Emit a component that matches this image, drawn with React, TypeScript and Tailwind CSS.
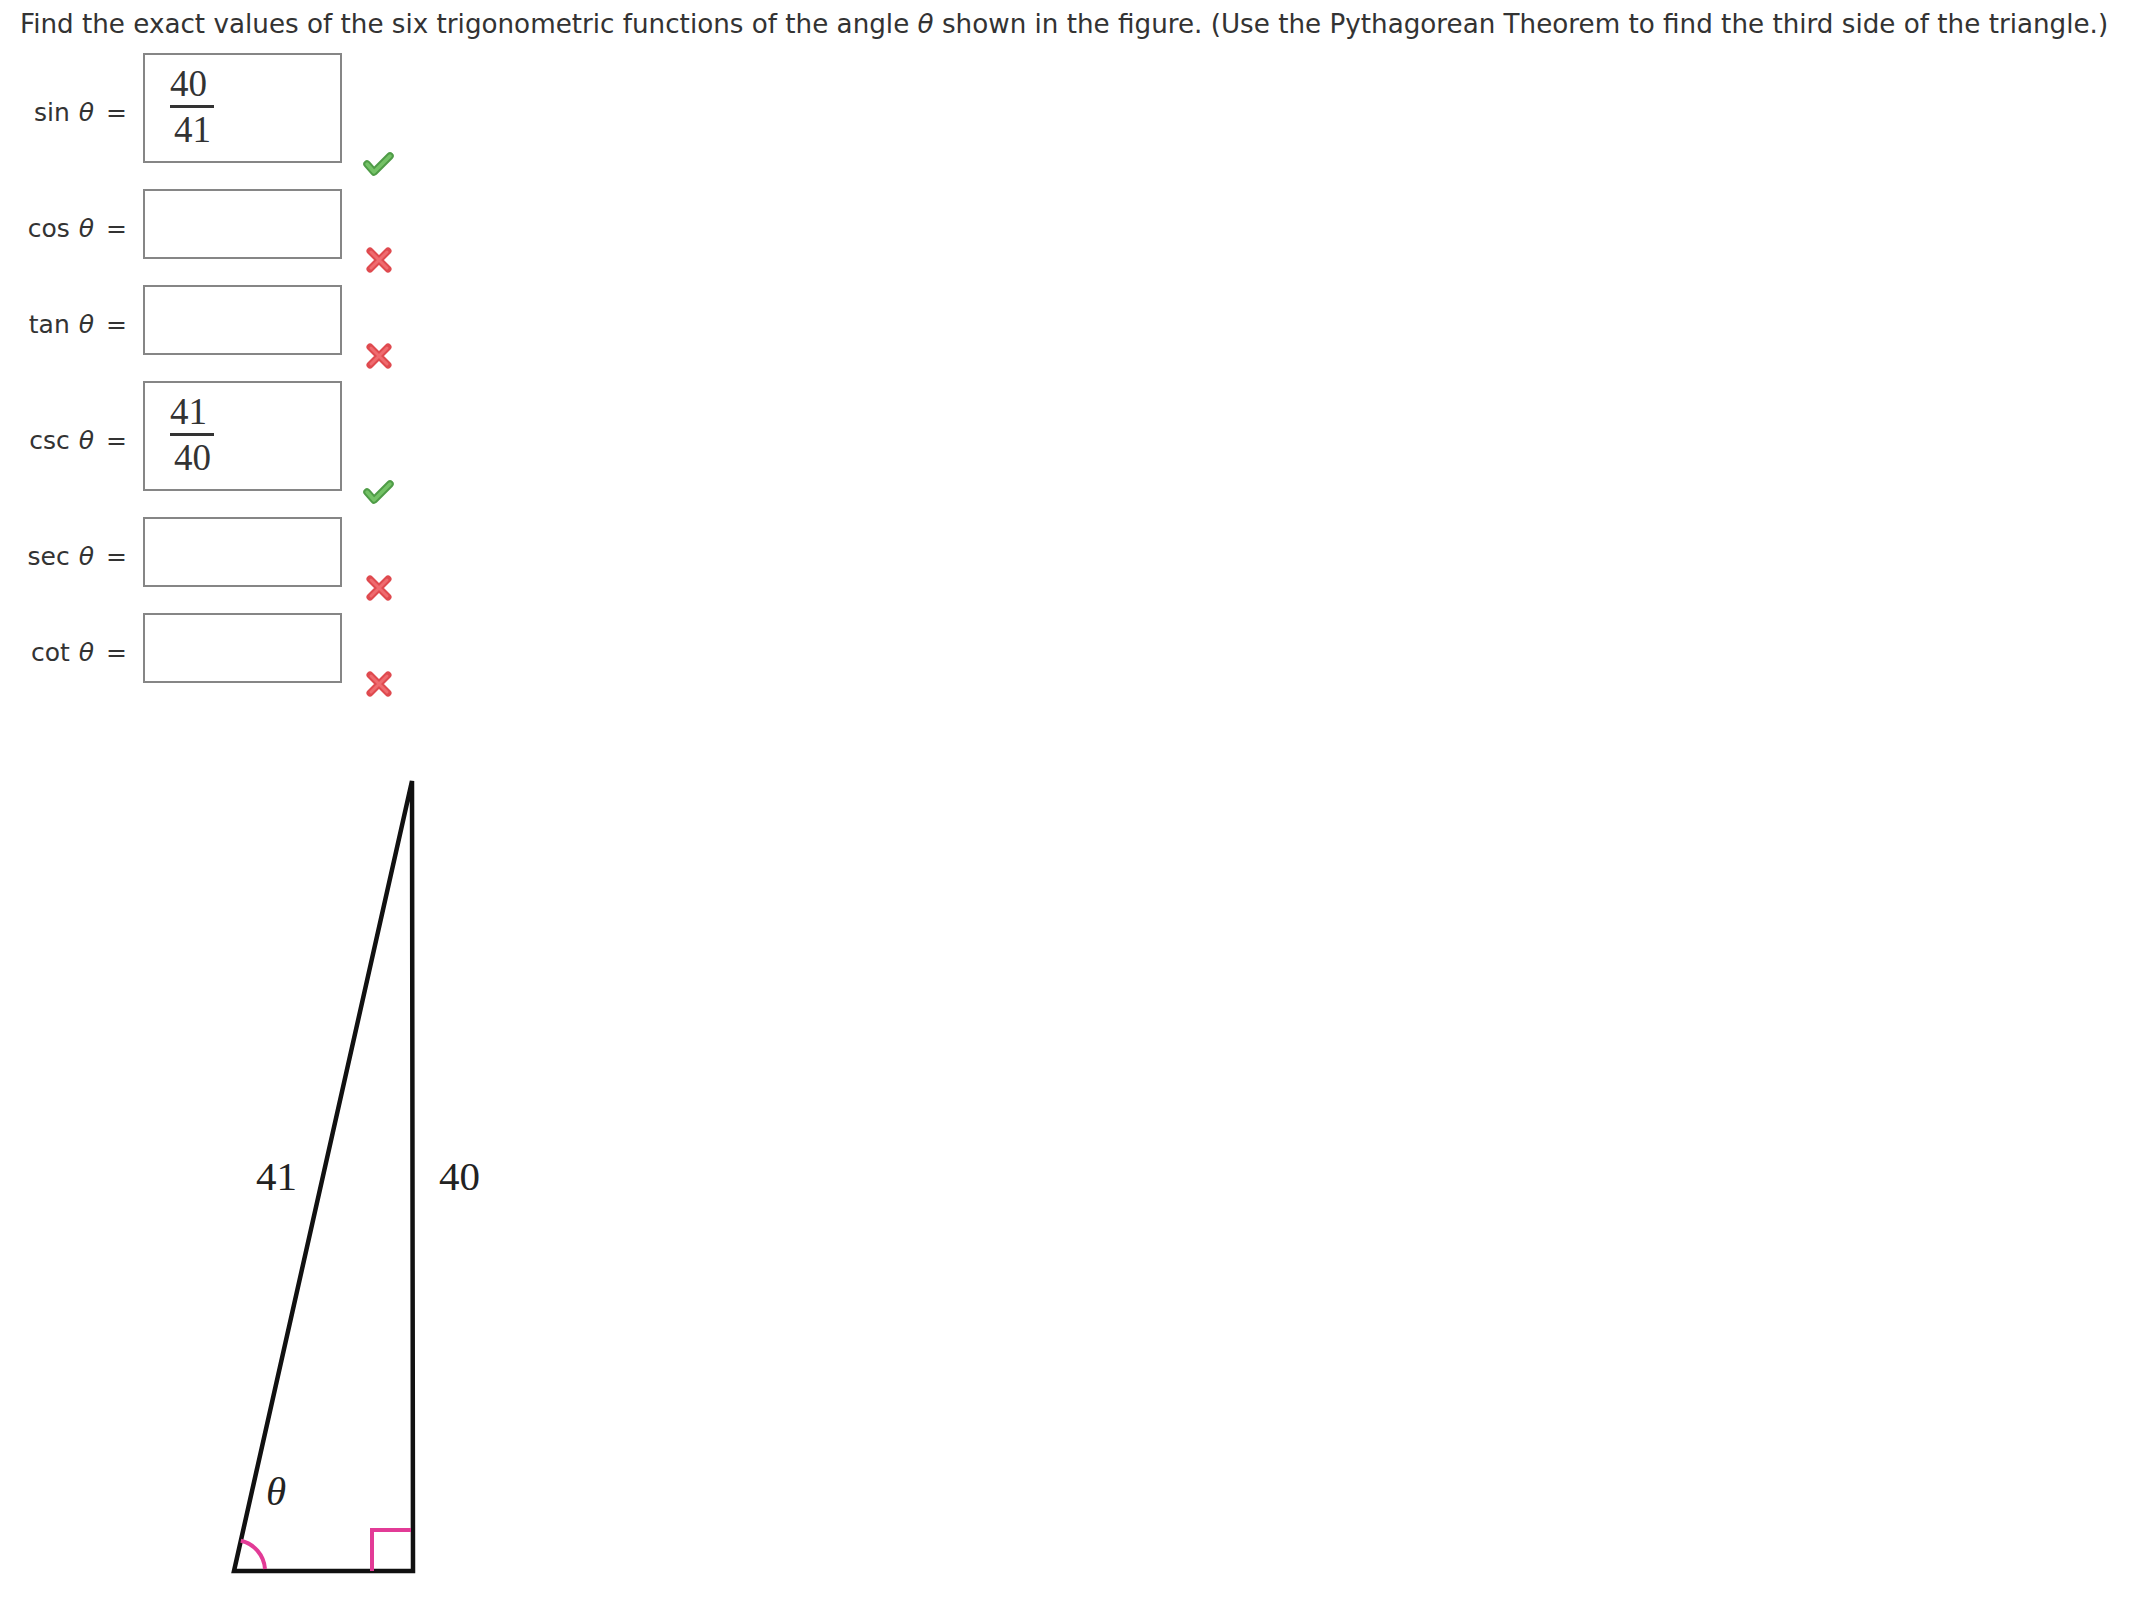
import React from 'react'

type Row = {
  fn: string
  value?: [string, string]
  correct: boolean
}

const rows: Row[] = [
  { fn: 'sin', value: ['40', '41'], correct: true },
  { fn: 'cos', correct: false },
  { fn: 'tan', correct: false },
  { fn: 'csc', value: ['41', '40'], correct: true },
  { fn: 'sec', correct: false },
  { fn: 'cot', correct: false },
]

function CheckIcon() {
  return (
    <svg width="31" height="27" viewBox="0 0 31 27" fill="none">
      <polyline points="4,14 11,22 27,6" stroke="#4f9c47" strokeWidth="7.5" strokeLinecap="round" strokeLinejoin="round" />
      <polyline points="4,14 11,22 27,6" stroke="#74c266" strokeWidth="3.5" strokeLinecap="round" strokeLinejoin="round" />
    </svg>
  )
}

function CrossIcon() {
  return (
    <svg width="28" height="28" viewBox="0 0 28 28" fill="none">
      <path d="M5 5 L23 23 M23 5 L5 23" stroke="#df4a4f" strokeWidth="7" strokeLinecap="round" />
      <path d="M6 6 L22 22 M22 6 L6 22" stroke="#ef6b6f" strokeWidth="3" strokeLinecap="round" />
    </svg>
  )
}

function Fraction({ top, bottom }: { top: string; bottom: string }) {
  return (
    <div className="flex w-[44px] flex-col font-['Liberation_Serif',serif] text-[37px] leading-none text-[#333]">
      <span className="pr-[8px] text-center">{top}</span>
      <span className="mt-[3px] h-[2.5px] w-full bg-[#333]" />
      <span className="mt-[3px] pl-[4px] pr-[4px] text-center">{bottom}</span>
    </div>
  )
}

function AnswerRow({ row }: { row: Row }) {
  return (
    <div className="flex items-end">
      <div className="flex w-[107px] items-center justify-end self-center pt-[9px] text-[25px] text-[#333]">
        <span>{row.fn}</span>
        <span className="ml-[9px] italic">θ</span>
        <span className="ml-[12px]">=</span>
      </div>
      <div
        className={`ml-[16px] w-[199px] border-2 border-[#868686] bg-white ${
          row.value ? 'h-[110px] pl-[25px] pt-[10px]' : 'h-[70px]'
        }`}
      >
        {row.value && <Fraction top={row.value[0]} bottom={row.value[1]} />}
      </div>
      <div className="mb-[-14px] ml-[21px] flex h-[27px] w-[31px] items-center justify-center">
        {row.correct ? <CheckIcon /> : <CrossIcon />}
      </div>
    </div>
  )
}

function Triangle() {
  return (
    <svg width="300" height="830" viewBox="0 0 300 830" className="ml-[180px] mt-[76px] block">
      <polygon points="212,22 34,812 213,812" fill="none" stroke="#111" strokeWidth="4.5" strokeLinejoin="miter" />
      <path d="M172 812 V771 H211" fill="none" stroke="#e23b96" strokeWidth="4" />
      <path d="M40.8 781.8 A31 31 0 0 1 65 810" fill="none" stroke="#e23b96" strokeWidth="4" />
      <text x="56" y="431" fontFamily="Liberation Serif, serif" fontSize="41" fill="#222">41</text>
      <text x="239" y="431" fontFamily="Liberation Serif, serif" fontSize="41" fill="#222">40</text>
      <text x="66" y="746" fontFamily="Liberation Serif, serif" fontSize="41" fontStyle="italic" fill="#222">θ</text>
    </svg>
  )
}

export default function App() {
  return (
    <div className="min-h-screen bg-white pl-[20px] pt-[9px] font-['DejaVu_Sans',sans-serif] text-[26.2px] leading-[31px] text-[#333]">
      <p className="whitespace-nowrap">
        Find the exact values of the six trigonometric functions of the angle <span className="italic">θ</span> shown in
        the figure. (Use the Pythagorean Theorem to find the third side of the triangle.)
      </p>
      <div className="mt-[13px] flex flex-col gap-[26px]">
        {rows.map((r) => (
          <AnswerRow key={r.fn} row={r} />
        ))}
      </div>
      <Triangle />
    </div>
  )
}
